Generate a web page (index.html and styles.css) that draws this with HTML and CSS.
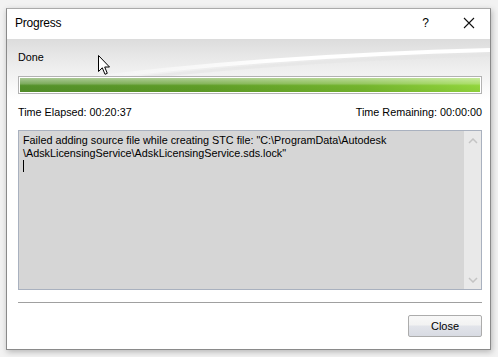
FILE: index.html
```html
<!DOCTYPE html>
<html>
<head>
<meta charset="utf-8">
<link rel="stylesheet" href="styles.css">
</head>
<body>
<div class="screen">
  <div class="window">
    <div class="titlebar">
      <span class="title">Progress</span>
      <span class="help">?</span>
      <svg class="close-x" width="12" height="12" viewBox="0 0 12 12"><path d="M1 1 L11 11 M11 1 L1 11" stroke="#111" stroke-width="1.1" fill="none"/></svg>
    </div>
    <div class="content">
      <svg class="swoosh" width="483" height="60" viewBox="0 0 483 60" preserveAspectRatio="none">
        <defs>
          <linearGradient id="g" x1="0" y1="0" x2="0" y2="1">
            <stop offset="0" stop-color="#dcdcdc"/>
            <stop offset="0.3" stop-color="#e8e8e8"/>
            <stop offset="1" stop-color="#ffffff"/>
          </linearGradient>
          <linearGradient id="w" x1="0" y1="0" x2="1" y2="0">
            <stop offset="0" stop-color="#ffffff" stop-opacity="0"/>
            <stop offset="0.5" stop-color="#ffffff" stop-opacity="1"/>
            <stop offset="1" stop-color="#ffffff" stop-opacity="1"/>
          </linearGradient>
        </defs>
        <rect x="0" y="0" width="483" height="60" fill="url(#g)"/>
        <path d="M60 42 C 200 24, 330 15, 483 11" stroke="url(#w)" stroke-width="4" fill="none"/>
        <path d="M60 47 C 200 29, 330 20, 483 16" stroke="#e4e4e4" stroke-opacity="0.6" stroke-width="3" fill="none"/>
      </svg>
      <div class="status">Done</div>
      <div class="bar"><div class="fill"></div></div>
      <div class="times"><span>Time Elapsed: 00:20:37</span><span>Time Remaining: 00:00:00</span></div>
      <div class="log">
        <div class="log-text">Failed adding source file while creating STC file: "C:\ProgramData\Autodesk<br>\AdskLicensingService\AdskLicensingService.sds.lock"<br><span class="caret"></span></div>
        <div class="scroll">
          <svg width="10" height="6" viewBox="0 0 10 6"><path d="M1 5 L5 1 L9 5" stroke="#c4c4c4" stroke-width="1.5" fill="none"/></svg>
          <svg width="10" height="6" viewBox="0 0 10 6"><path d="M1 1 L5 5 L9 1" stroke="#c4c4c4" stroke-width="1.5" fill="none"/></svg>
        </div>
      </div>
      <div class="sep"></div>
      <div class="footer"><button class="btn">Close</button></div>
    </div>
  </div>
  <svg class="cursor" width="13" height="21" viewBox="0 0 13 21"><path d="M0.5 0.5 L0.5 16.5 L4.3 12.8 L7 19.3 L9.3 18.3 L6.7 12 L11.5 12 Z" fill="#fff" stroke="#000" stroke-width="1"/></svg>
</div>
</body>
</html>
```
FILE: styles.css
```css
html, body {
  margin: 0;
  padding: 0;
}
body {
  background: #f2f2f2;
  font-family: "Liberation Sans", Arial, sans-serif;
  font-size: 10.8px;
  color: #000;
}
.screen {
  position: relative;
  width: 498px;
  height: 357px;
  overflow: hidden;
  padding: 8px 0 0 6px;
  box-sizing: border-box;
}
.window {
  width: 485px;
  height: 342px;
  box-sizing: border-box;
  border: 1px solid #8a8a8a;
  border-top-color: #aaaaaa;
  background: #fff;
  box-shadow: 1px 2px 6px rgba(0,0,0,0.25);
  display: flex;
  flex-direction: column;
}
.titlebar {
  height: 30px;
  flex: none;
  display: flex;
  align-items: center;
  background: #fff;
}
.title {
  font-size: 12px;
  margin-left: 8px;
  flex: 1;
  letter-spacing: -0.2px;
  padding-bottom: 2px;
}
.help {
  font-size: 12px;
  margin-right: 34px;
  padding-bottom: 2px;
}
.close-x {
  margin-right: 15px;
  margin-bottom: 3px;
}
.content {
  position: relative;
  flex: 1;
  display: flex;
  flex-direction: column;
  padding: 0 8px 0 11px;
}
.swoosh {
  position: absolute;
  left: 0;
  top: 0;
}
.status {
  position: relative;
  margin-top: 12px;
  height: 13px;
  line-height: 13px;
}
.bar {
  position: relative;
  margin-top: 12px;
  height: 18px;
  box-sizing: border-box;
  border: 1px solid #b2b2b2;
  background: #fff;
  padding: 1px;
}
.fill {
  height: 100%;
  background:
    linear-gradient(to bottom, rgba(255,255,255,0.5) 0, rgba(255,255,255,0.25) 40%, rgba(255,255,255,0) 55%, rgba(0,0,0,0.04) 100%),
    linear-gradient(to right, #53902a 0, #5f9e27 40%, #74b52d 75%, #92d63c 100%);
}
.times {
  display: flex;
  justify-content: space-between;
  margin-top: 12px;
  height: 13px;
  line-height: 13px;
}
.log {
  margin-top: 11px;
  height: 160px;
  box-sizing: border-box;
  border: 1px solid #a9b1bf;
  background: #d6d6d6;
  display: flex;
}
.log-text {
  flex: 1;
  padding: 3px 0 0 4px;
  line-height: 13px;
}
.caret {
  display: inline-block;
  width: 1px;
  height: 12px;
  background: #000;
  vertical-align: -2px;
}
.scroll {
  width: 17px;
  background: #e9e9e9;
  display: flex;
  flex-direction: column;
  justify-content: space-between;
  align-items: center;
  padding: 7px 0 6px;
}
.sep {
  margin-top: 12px;
  height: 1px;
  background: #a0a0a0;
  border-bottom: 1px solid #fff;
}
.footer {
  display: flex;
  justify-content: flex-end;
  margin-top: 11px;
}
.btn {
  width: 74px;
  height: 22px;
  border: 1px solid #acacac;
  border-radius: 2px;
  font-family: "Liberation Sans", Arial, sans-serif;
  font-size: 11px;
  color: #000;
  background: linear-gradient(to bottom, #f8f8f8 0, #f2f2f2 45%, #e2e4ea 50%, #d8dbe3 100%);
  padding: 0 0 1px;
}
.cursor {
  position: absolute;
  left: 98px;
  top: 55px;
}
```
